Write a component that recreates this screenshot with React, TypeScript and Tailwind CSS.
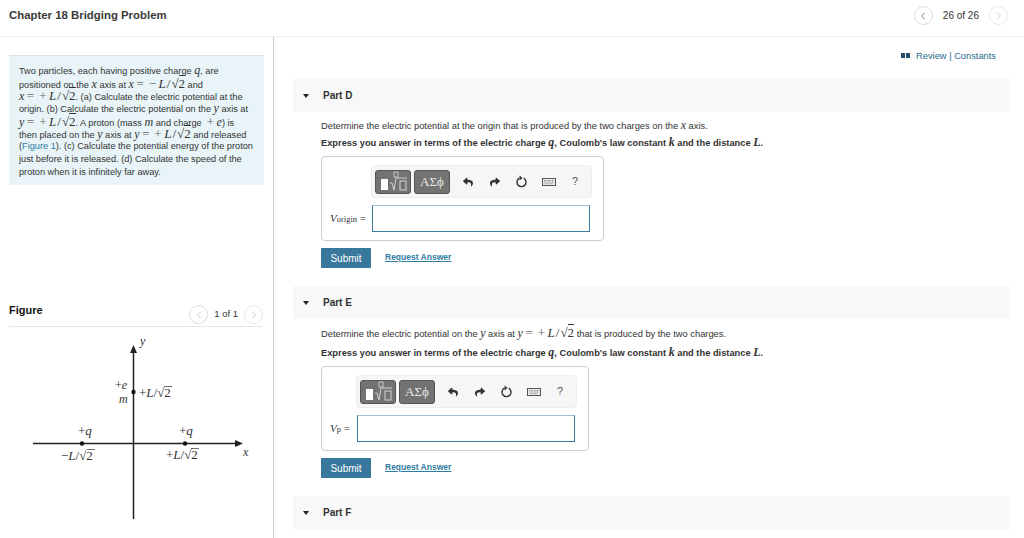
import type { ReactNode } from 'react'
import { ChevronLeft, ChevronRight } from 'lucide-react'
import { FaReply, FaShare } from 'react-icons/fa'

const SANS = 'font-["Liberation_Sans",Arial,sans-serif]'

function M({ children }: { children: ReactNode }) {
  return <span className='font-["Liberation_Serif",serif] italic text-[12px] leading-none'>{children}</span>
}

function Op({ children }: { children: ReactNode }) {
  return <span className='mx-[2.500px] font-["Liberation_Serif",serif] text-[13px] leading-none text-[#666]'>{children}</span>
}

// the L/sqrt(2) term that keeps coming back in the problem text
function Term() {
  return (
    <span className='font-["Liberation_Serif",serif] text-[13px] leading-none'>
      <i>L</i>
      <span className="mx-px">/</span>
      √<span className="border-t border-current leading-none">2</span>
    </span>
  )
}

function Pager({ label, gap, size, left, right }: { label: string; gap: string; size: string; left: string; right: string }) {
  return (
    <div className={`flex items-center ${gap}`}>
      <span className="flex w-[19px] h-[19px] items-center justify-center rounded-full border border-[#dcdcdc]">
        <ChevronLeft className={`w-3 h-3 ${left}`} strokeWidth={1.5} />
      </span>
      <span className={`${size} text-[#333]`}>{label}</span>
      <span className="flex w-[19px] h-[19px] items-center justify-center rounded-full border border-[#e8e8e8]">
        <ChevronRight className={`w-3 h-3 ${right}`} strokeWidth={1.5} />
      </span>
    </div>
  )
}

function PartBar({ name }: { name: string }) {
  return (
    <div className="flex h-[33px] items-center bg-[#f8f8f8]">
      <span className="ml-[10px] w-0 h-0 border-x-[3.5px] border-x-transparent border-t-[4px] border-t-[#222]" />
      <span className="ml-[14px] text-[10px] font-bold text-[#333]">{name}</span>
    </div>
  )
}

function TemplateIcon() {
  return (
    <svg width="34" height="24" viewBox="0 0 34 24" fill="none">
      <rect x="5" y="9" width="7" height="11" fill="#fff" />
      <rect x="18" y="2" width="4" height="5" stroke="#ddd" strokeWidth="0.8" />
      <path d="M14 13h2l2 7 2-12h11" stroke="#ddd" strokeWidth="0.9" />
      <rect x="24" y="11" width="6" height="9" stroke="#ddd" strokeWidth="0.9" />
    </svg>
  )
}

function KeyboardIcon() {
  return (
    <svg className="block" width="14" height="8" viewBox="0 0 14 8">
      <rect x="0.5" y="0.5" width="13" height="7" fill="#eee" stroke="#555" />
      <path d="M2 2.500h10M2 4h10M3 5.700h8" stroke="#777" strokeWidth="0.8" strokeDasharray="1 0.6" />
    </svg>
  )
}

function RefreshIcon() {
  return (
    <svg className="ml-[15px] block" width="13" height="13" viewBox="0 0 13 13" fill="none">
      <path d="M4.300 3.200a4.500 4.500 0 1 0 4.400 0" stroke="#333" strokeWidth="1.400" />
      <path d="M6 0.500v5l3-2.500z" fill="#333" transform="translate(-1.500 0)" />
    </svg>
  )
}

function Toolbar() {
  return (
    <div className="flex h-[33px] w-[221px] items-center rounded-[4px] border border-[#eee] bg-[#f6f6f6] pl-[3px] text-[#333]">
      <span className="flex h-[24px] w-[36px] items-center justify-center rounded-[3px] border border-[#555] bg-[#737373]">
        <TemplateIcon />
      </span>
      <span className='ml-[3px] flex h-[24px] w-[36px] items-center justify-center rounded-[3px] border border-[#555] bg-[#737373] font-["Liberation_Serif",serif] text-[13px] text-[#e8e8e8]'>
        ΑΣϕ
      </span>
      <FaReply className="ml-[13px] w-[10px] h-[10px]" />
      <FaShare className="ml-[17px] w-[10px] h-[10px]" />
      <RefreshIcon />
      <span className="ml-[14px]"><KeyboardIcon /></span>
      <span className="ml-[16px] text-[11px] text-[#555]">?</span>
    </div>
  )
}

function Answer({ width, pad, label, labelWidth }: { width: string; pad: string; label: ReactNode; labelWidth: string }) {
  return (
    <div className={`${width} h-[85px] rounded-[4px] border border-[#ccc] pt-[8px]`}>
      <div className={pad}><Toolbar /></div>
      <div className="mt-[7px] flex items-center">
        <span className={`${labelWidth} pl-[8px] font-["Liberation_Serif",serif] text-[11px] text-[#333]`}>{label}</span>
        <span className="h-[27px] w-[218px] border border-[#3b7a9e] border-t-[#9fc0d2] bg-white" />
      </div>
    </div>
  )
}

function Actions() {
  return (
    <div className="flex items-center">
      <span className="flex h-[20px] w-[50px] items-center justify-center rounded-[1px] bg-[#38789c] text-[10px] text-white">Submit</span>
      <span className="ml-[14px] mb-[1px] text-[8.500px] font-bold text-[#2f7ca3] underline">Request Answer</span>
    </div>
  )
}

function Figure() {
  const serif = { fontFamily: '"Liberation Serif", serif', fill: '#333' }
  return (
    <svg className="mt-[6px] block" width="255" height="205" viewBox="9 333 255 205">
      <path d="M33 443.500H238M133.500 350V519" stroke="#222" strokeWidth="1.500" />
      <path d="M133.500 345l-3.500 8h7zM243 443.500l-8-3.500v7z" fill="#222" />
      <circle cx="82" cy="443.500" r="2.200" fill="#111" />
      <circle cx="185" cy="443.500" r="2.200" fill="#111" />
      <circle cx="133.500" cy="392" r="2.200" fill="#111" />
      <g style={serif} fontSize="13">
        <text x="140" y="345" fontStyle="italic" fontSize="12">y</text>
        <text x="243" y="456" fontStyle="italic" fontSize="12">x</text>
        <text x="115" y="389" fontSize="12">+<tspan fontStyle="italic">e</tspan></text>
        <text x="119" y="403" fontStyle="italic" fontSize="12">m</text>
        <text x="78" y="435">+<tspan fontStyle="italic">q</tspan></text>
        <text x="179" y="435">+<tspan fontStyle="italic">q</tspan></text>
        <text x="139" y="397">+<tspan fontStyle="italic">L</tspan>/√2</text>
        <text x="61" y="460">−<tspan fontStyle="italic">L</tspan>/√2</text>
        <text x="166" y="459">+<tspan fontStyle="italic">L</tspan>/√2</text>
      </g>
      <path d="M164 386.500h8M87 449.500h8M191 448.500h8" stroke="#333" strokeWidth="0.700" />
    </svg>
  )
}

const PROBLEM: ReactNode[] = [
  <>Two particles, each having positive charge <M>q</M>, are</>,
  <>positioned on the <M>x</M> axis at <M>x</M><Op>=</Op><Op>−</Op><Term /> and</>,
  <><M>x</M><Op>=</Op><Op>+</Op><Term />. (a) Calculate the electric potential at the</>,
  <>origin. (b) Calculate the electric potential on the <M>y</M> axis at</>,
  <><M>y</M><Op>=</Op><Op>+</Op><Term />. A proton (mass <M>m</M> and charge <Op>+</Op><M>e</M>) is</>,
  <>then placed on the <M>y</M> axis at <M>y</M><Op>=</Op><Op>+</Op><Term /> and released</>,
  <>(<span className="text-[#2f7ca3]">Figure 1</span>). (c) Calculate the potential energy of the proton</>,
  <>just before it is released. (d) Calculate the speed of the</>,
  <>proton when it is infinitely far away.</>,
]

export default function App() {
  return (
    <div className={`${SANS} h-[538px] w-[1024px] overflow-hidden bg-white text-[#333]`}>
      <header className="flex h-[37px] items-center justify-between border-b border-[#f0f0f0] pb-[5px] pl-[9px] pr-[16px]">
        <h1 className="text-[11.400px] font-bold text-[#3a3a3a]">Chapter 18 Bridging Problem</h1>
        <Pager label="26 of 26" gap="gap-[10px]" size="text-[10px]" left="text-[#555]" right="text-[#bbb]" />
      </header>

      <div className="flex h-[501px]">
        <aside className="h-full w-[274px] border-r border-[#c8ccd0] pl-[9px] pr-[9px] pt-[18px]">
          <div className="h-[130px] w-[255px] border-t border-[#d5e3e8] bg-[#e8f4f7] pl-[10px] pt-[8px] text-[9.200px] leading-[12.700px] text-[#333]">
            {PROBLEM.map((line, i) => (
              <div key={i} className="h-[12.700px] whitespace-nowrap">{line}</div>
            ))}
          </div>

          <div className="mt-[114px] flex h-[28px] w-[254px] items-start justify-between border-b border-[#e6e6e6]">
            <h2 className="mt-[3px] text-[11px] font-bold text-[#111]">Figure</h2>
            <div className="mt-[6px]">
              <Pager label="1 of 1" gap="gap-[6px]" size="text-[9.500px]" left="text-[#bbb]" right="text-[#bbb]" />
            </div>
          </div>
          <Figure />
        </aside>

        <main className="flex-1 pl-[19px] pr-[14px]">
          <div className="flex h-[42px] items-start justify-end pr-[14px] pt-[13px] text-[9.300px] text-[#2a6a8a]">
            <span className="mr-[6px] mt-[3px] flex gap-px">
              <span className="h-[5px] w-[4px] bg-[#23506e]" />
              <span className="h-[5px] w-[4px] bg-[#23506e]" />
            </span>
            Review | Constants
          </div>

          <PartBar name="Part D" />
          <div className="pl-[28px]">
            <p className="mt-[7px] text-[9.300px] leading-[12px]">Determine the electric potential at the origin that is produced by the two charges on the <M>x</M> axis.</p>
            <p className="mt-[4px] text-[9.300px] font-bold leading-[12px]">Express you answer in terms of the electric charge <M>q</M>, Coulomb's law constant <M>k</M> and the distance <M>L</M>.</p>
            <div className="mt-[7px]">
              <Answer width="w-[283px]" pad="pl-[49px]" labelWidth="w-[50px]" label={<><i>V</i><span className="text-[8.500px]">origin</span> =</>} />
            </div>
            <div className="mt-[7px]"><Actions /></div>
          </div>

          <div className="mt-[18px]"><PartBar name="Part E" /></div>
          <div className="pl-[28px]">
            <p className="mt-[7px] text-[9.300px] leading-[12px]">Determine the electric potential on the <M>y</M> axis at <M>y</M><Op>=</Op><Op>+</Op><Term /> that is produced by the two charges.</p>
            <p className="mt-[6px] text-[9.300px] font-bold leading-[12px]">Express you answer in terms of the electric charge <M>q</M>, Coulomb's law constant <M>k</M> and the distance <M>L</M>.</p>
            <div className="mt-[7px]">
              <Answer width="w-[268px]" pad="pl-[34px]" labelWidth="w-[35px]" label={<><i>V</i><span className="text-[8.500px]">p</span> =</>} />
            </div>
            <div className="mt-[7px]"><Actions /></div>
          </div>

          <div className="mt-[18px]"><PartBar name="Part F" /></div>
        </main>
      </div>
    </div>
  )
}
